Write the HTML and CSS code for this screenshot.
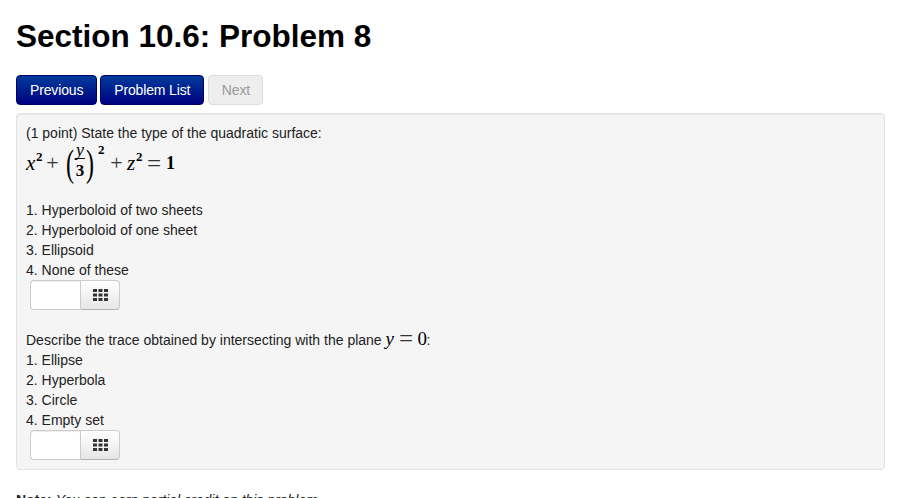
FILE: index.html
```html
<!DOCTYPE html>
<html lang="en">

<head>
  <meta charset="UTF-8">
  <meta name="viewport" content="width=device-width, initial-scale=1.0">
  <title>Section 10.6: Problem 8</title>
  <link rel="stylesheet" href="styles.css">
</head>

<body>
  <div class="page">
    <h1 class="title">Section 10.6: Problem 8</h1>

    <div class="nav">
      <a class="btn btn-primary">Previous</a>
      <a class="btn btn-primary">Problem List</a>
      <a class="btn btn-disabled">Next</a>
    </div>

    <div class="well">
      <div class="line">(1 point) State the type of the quadratic surface:</div>
      <div class="formula">
        <i>x</i><sup>2</sup><span class="op op-first">+</span><span class="paren">(</span><span class="frac"><i>y</i><b>3</b></span><span class="paren">)</span><sup class="outer">2</sup><span class="op op-second">+</span><i>z</i><sup>2</sup><span class="op op-equals">=</span><b>1</b>
      </div>

      <div class="line">1. Hyperboloid of two sheets</div>
      <div class="line">2. Hyperboloid of one sheet</div>
      <div class="line">3. Ellipsoid</div>
      <div class="line">4. None of these</div>
      <div class="answer">
        <input class="answer-input" type="text">
        <button class="answer-btn">
          <svg width="15" height="12" viewBox="0 0 15 12"><path fill="#333" d="M0 0h4v3H0zM5.500 0h4v3h-4zM11 0h4v3h-4zM0 4.500h4v3H0zM5.500 4.500h4v3h-4zM11 4.500h4v3h-4zM0 9h4v3H0zM5.500 9h4v3h-4zM11 9h4v3h-4z"/></svg>
        </button>
      </div>

      <div class="line">Describe the trace obtained by intersecting with the plane <span class="inline-math"><i>y</i><span class="op">=</span><b>0</b></span>:</div>
      <div class="line">1. Ellipse</div>
      <div class="line">2. Hyperbola</div>
      <div class="line">3. Circle</div>
      <div class="line">4. Empty set</div>
      <div class="answer answer-last">
        <input class="answer-input" type="text">
        <button class="answer-btn">
          <svg width="15" height="12" viewBox="0 0 15 12"><path fill="#333" d="M0 0h4v3H0zM5.500 0h4v3h-4zM11 0h4v3h-4zM0 4.500h4v3H0zM5.500 4.500h4v3h-4zM11 4.500h4v3h-4zM0 9h4v3H0zM5.500 9h4v3h-4zM11 9h4v3h-4z"/></svg>
        </button>
      </div>
    </div>

    <p class="note"><b>Note:</b> <i>You can earn partial credit on this problem.</i></p>
  </div>
</body>

</html>
```

FILE: styles.css
```css
* {
  margin: 0;
  padding: 0;
  box-sizing: border-box;
}

html,
body {
  height: 100%;
  overflow: hidden;
}

body {
  background: #fff;
  color: #333;
  font-family: "Liberation Sans", Arial, sans-serif;
  font-size: 14px;
  line-height: 20px;
}

.page {
  width: 869px;
  margin-left: 16px;
}

.title {
  color: #000;
  font-size: 31.500px;
  font-weight: bold;
  line-height: 36px;
  padding-top: 18px;
  height: 75px;
}

.nav {
  display: flex;
  gap: 3px;
  height: 38px;
}

.btn {
  display: block;
  height: 30px;
  padding: 4px 13px;
  border: 1px solid;
  border-radius: 4px;
  font-size: 14px;
  letter-spacing: -0.150px;
  line-height: 20px;
}

.btn-primary {
  color: #fff;
  background: linear-gradient(#003c9c, #00007f);
  border-color: #00006a;
}

.btn-disabled {
  margin-left: 1px;
  padding: 4px 12.500px;
  color: #999;
  background: #eee;
  border-color: #ddd;
}

.well {
  height: 357px;
  padding: 9px;
  background: #f5f5f5;
  border: 1px solid #e3e3e3;
  border-radius: 4px;
  box-shadow: inset 0 1px 1px rgba(0, 0, 0, 0.05);
}

.line {
  height: 20px;
  color: #222;
}

.formula {
  display: flex;
  align-items: center;
  height: 57px;
  padding-bottom: 17px;
  color: #000;
  font-family: "Liberation Serif", serif;
  font-size: 19px;
  line-height: 1;
}

.formula i {
  width: 10px;
  font-size: 21px;
}

.formula i:nth-of-type(2) {
  width: 9px;
}

.formula b {
  font-size: 18px;
  font-weight: bold;
}

.formula sup {
  align-self: flex-start;
  width: 6px;
  margin-top: 7px;
  font-size: 13px;
  font-weight: bold;
}

.formula sup.outer {
  margin: 0 0 0 4px;
}

.op {
  display: inline-block;
  width: 13px;
  color: #333;
  font-size: 22px;
  text-align: center;
}

.op-first {
  margin: 0 7px 0 4px;
}

.op-second {
  margin: 0 4px 0 6px;
}

.op-equals {
  width: 14px;
  margin: 0 5px;
  font-size: 25px;
}

.paren {
  width: 8px;
  font-size: 24px;
  font-weight: normal;
  line-height: 24px;
  text-align: center;
  transform: scaleY(1.600);
}

.frac {
  display: flex;
  flex-direction: column;
  align-items: center;
  width: 10px;
  margin: 0 1px 4px;
}

.formula .frac i {
  width: 100%;
  height: 15px;
  border-bottom: 1px solid #111;
  font-size: 18px;
  line-height: 13px;
  text-align: center;
}

.formula .frac b {
  padding-top: 5px;
  font-size: 17px;
  line-height: 14px;
}

.inline-math {
  color: #000;
  font-family: "Liberation Serif", serif;
  font-size: 19px;
  line-height: 0;
}

.inline-math i {
  display: inline-block;
  width: 9px;
  font-size: 19px;
}

.inline-math .op {
  width: 15px;
  margin: 0 4px;
  font-size: 25px;
  vertical-align: -2px;
}

.inline-math b {
  display: inline-block;
  width: 9px;
  font-size: 19px;
  font-weight: normal;
}

.answer {
  display: flex;
  height: 30px;
  margin: 0 0 20px 4px;
}

.answer-last {
  margin-bottom: 0;
}

.answer-input {
  width: 50px;
  height: 30px;
  background: #fff;
  border: 1px solid #ccc;
  border-right: none;
  border-radius: 4px 0 0 4px;
  box-shadow: inset 0 1px 1px rgba(0, 0, 0, 0.075);
  outline: none;
}

.answer-btn {
  display: flex;
  align-items: center;
  justify-content: center;
  width: 40px;
  height: 30px;
  background: linear-gradient(#fff, #e6e6e6);
  border: 1px solid #ccc;
  border-bottom-color: #b3b3b3;
  border-radius: 0 4px 4px 0;
}

.note {
  margin-top: 20px;
  color: #222;
}
```
